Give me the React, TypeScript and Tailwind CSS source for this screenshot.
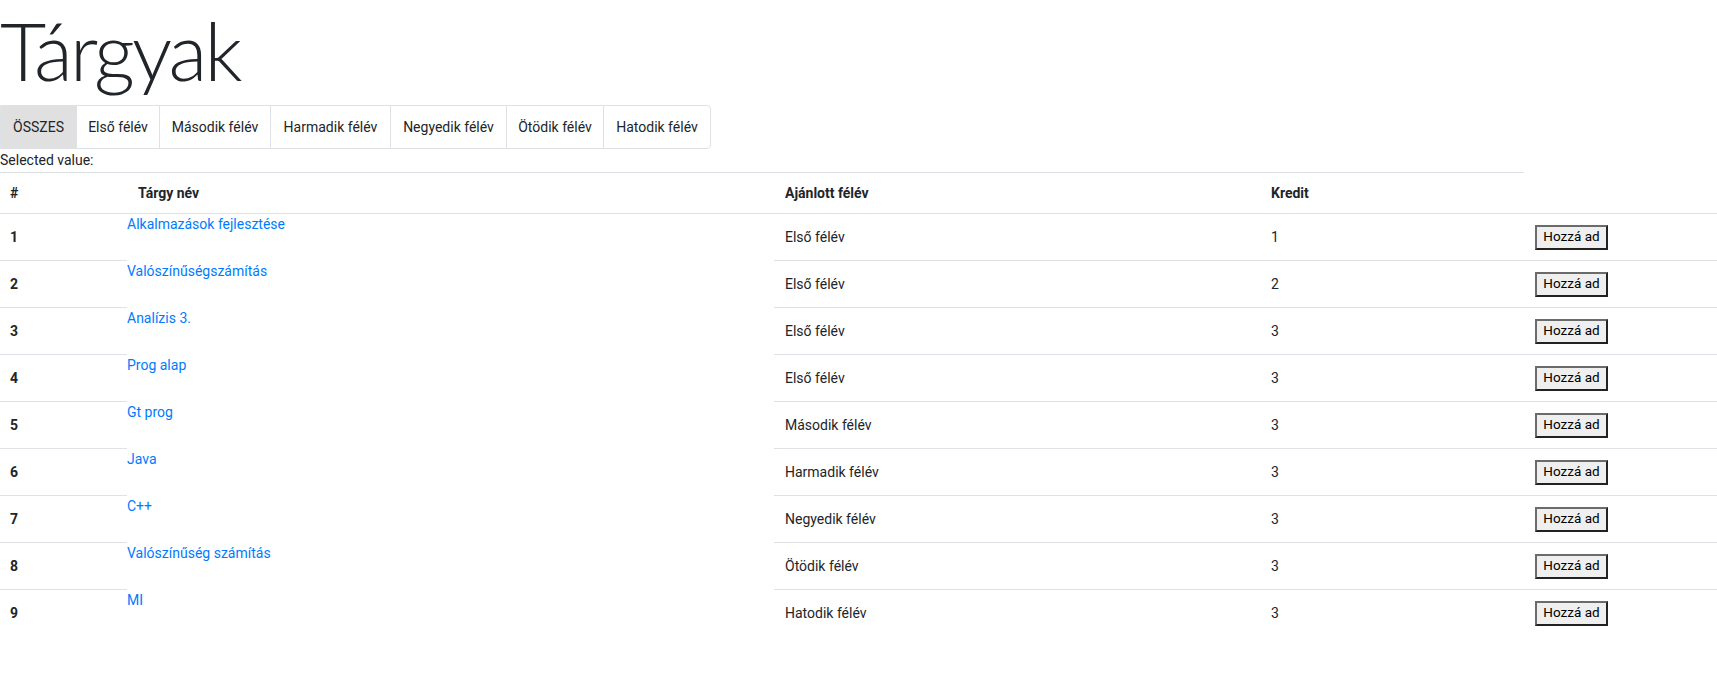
import React from "react";

const tabs = [
  { label: "ÖSSZES", w: "w-[75px]", active: true },
  { label: "Első félév", w: "w-[83px]", active: false },
  { label: "Második félév", w: "w-[111px]", active: false },
  { label: "Harmadik félév", w: "w-[120px]", active: false },
  { label: "Negyedik félév", w: "w-[116px]", active: false },
  { label: "Ötödik félév", w: "w-[97px]", active: false },
  { label: "Hatodik félév", w: "w-[107px]", active: false },
];

const subjects = [
  { name: "Alkalmazások fejlesztése", semester: "Első félév", credit: 1 },
  { name: "Valószínűségszámítás", semester: "Első félév", credit: 2 },
  { name: "Analízis 3.", semester: "Első félév", credit: 3 },
  { name: "Prog alap", semester: "Első félév", credit: 3 },
  { name: "Gt prog", semester: "Második félév", credit: 3 },
  { name: "Java", semester: "Harmadik félév", credit: 3 },
  { name: "C++", semester: "Negyedik félév", credit: 3 },
  { name: "Valószínűség számítás", semester: "Ötödik félév", credit: 3 },
  { name: "MI", semester: "Hatodik félév", credit: 3 },
];

function App() {
  return (
    <div className="w-[1717px] min-h-[686px] bg-white font-['Roboto',sans-serif] text-[14px] text-[#212529] overflow-hidden">
      <h1 className="h-[105px] font-['Lato',sans-serif] font-light text-[80px] leading-[100px] tracking-[-0.035em] text-[#212529]">
        Tárgyak
      </h1>

      <div className="flex h-[44px] w-fit border border-[#dee2e6] rounded-r">
        {tabs.map((t, i) => (
          <div
            key={t.label}
            className={
              "flex items-center justify-center " +
              t.w +
              (i > 0 ? " border-l border-[#dee2e6]" : "") +
              (t.active ? " bg-[#e0e0e0]" : "")
            }
          >
            {t.label}
          </div>
        ))}
      </div>

      <div className="h-[23px] leading-[23px]">Selected value:</div>

      {/* header */}
      <div className="flex h-[41px] font-bold">
        <div className="w-[127px] pl-[10px] flex items-center border-t border-[#dee2e6]">#</div>
        <div className="w-[647px] pl-[11px] flex items-center border-t border-[#dee2e6]">Tárgy név</div>
        <div className="w-[486px] pl-[11px] flex items-center border-t border-[#dee2e6]">Ajánlott félév</div>
        <div className="w-[264px] pl-[11px] flex items-center border-t border-[#dee2e6]">Kredit</div>
        <div className="flex-1" />
      </div>

      {subjects.map((s, i) => (
        <div key={i} className="flex h-[47px]">
          <div className="w-[127px] pl-[10px] flex items-center font-bold border-t border-[#dee2e6]">{i + 1}</div>
          <div
            className={
              "w-[647px] border-t leading-[21px] " +
              (i === 0 ? "border-[#dee2e6]" : "border-transparent")
            }
          >
            <a href="#" className="text-[#007bff]">
              {s.name}
            </a>
          </div>
          <div className="w-[486px] pl-[11px] flex items-center border-t border-[#dee2e6]">{s.semester}</div>
          <div className="w-[265px] pl-[11px] flex items-center border-t border-[#dee2e6]">{s.credit}</div>
          <div className="flex-1 pl-[10px] flex items-center border-t border-[#dee2e6]">
            <button className="w-[73px] h-[25px] bg-[#efefef] border-2 border-t-[#6b6b6b] border-l-[#6b6b6b] border-r-[#222] border-b-[#222] font-['Roboto',sans-serif] font-normal text-[13.5px] text-black leading-none">
              Hozzá ad
            </button>
          </div>
        </div>
      ))}
    </div>
  );
}

export default App;
